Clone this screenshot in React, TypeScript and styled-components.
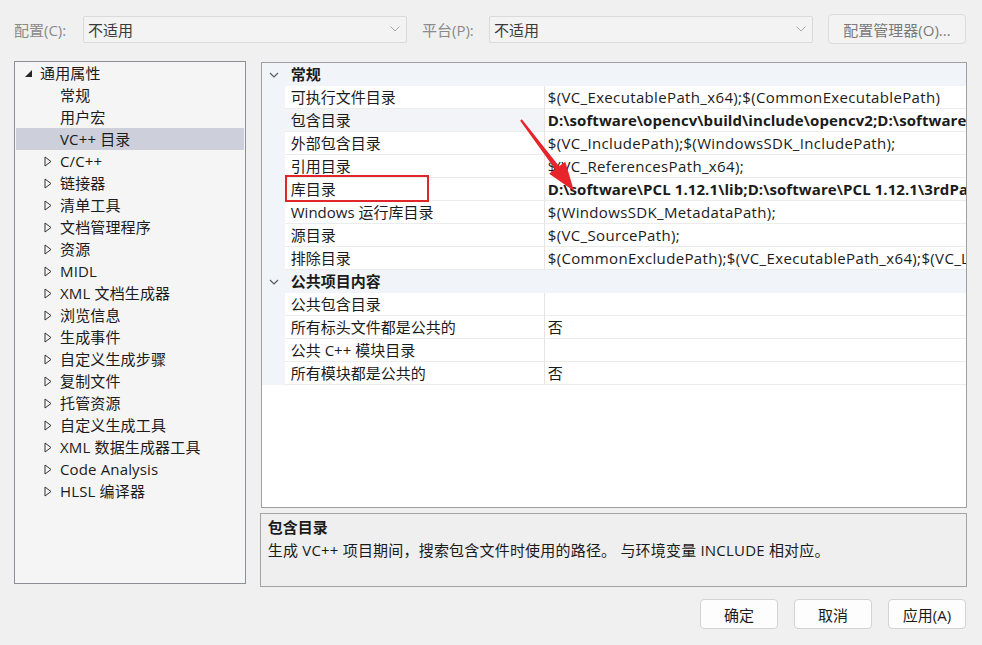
import React from 'react';
import styled, {createGlobalStyle} from 'styled-components';

const GlobalStyle = createGlobalStyle`
  html, body {
    margin: 0;
    padding: 0;
    background: #f0f0f0;
  }
  * {
    box-sizing: border-box;
  }
  body {
    font-family: "Open Sans", "Noto Sans CJK SC", sans-serif;
    font-size: 15px;
    color: #1b1b1b;
  }
`

type TreeItem = { label: string; level: 0 | 1; expander?: 'open' | 'closed'; selected?: boolean }

const treeItems: TreeItem[] = [
    {label: '通用属性', level: 0, expander: 'open'},
    {label: '常规', level: 1},
    {label: '用户宏', level: 1},
    {label: 'VC++ 目录', level: 1, selected: true},
    {label: 'C/C++', level: 1, expander: 'closed'},
    {label: '链接器', level: 1, expander: 'closed'},
    {label: '清单工具', level: 1, expander: 'closed'},
    {label: '文档管理程序', level: 1, expander: 'closed'},
    {label: '资源', level: 1, expander: 'closed'},
    {label: 'MIDL', level: 1, expander: 'closed'},
    {label: 'XML 文档生成器', level: 1, expander: 'closed'},
    {label: '浏览信息', level: 1, expander: 'closed'},
    {label: '生成事件', level: 1, expander: 'closed'},
    {label: '自定义生成步骤', level: 1, expander: 'closed'},
    {label: '复制文件', level: 1, expander: 'closed'},
    {label: '托管资源', level: 1, expander: 'closed'},
    {label: '自定义生成工具', level: 1, expander: 'closed'},
    {label: 'XML 数据生成器工具', level: 1, expander: 'closed'},
    {label: 'Code Analysis', level: 1, expander: 'closed'},
    {label: 'HLSL 编译器', level: 1, expander: 'closed'},
]

type Prop = { name: string; value: string; bold?: boolean; selected?: boolean }
type Category = { title: string; props: Prop[] }

// long values are clipped by the grid edge, just like in the dialog
const categories: Category[] = [
    {
        title: '常规',
        props: [
            {name: '可执行文件目录', value: '$(VC_ExecutablePath_x64);$(CommonExecutablePath)'},
            {name: '包含目录', value: 'D:\\software\\opencv\\build\\include\\opencv2;D:\\software', bold: true, selected: true},
            {name: '外部包含目录', value: '$(VC_IncludePath);$(WindowsSDK_IncludePath);'},
            {name: '引用目录', value: '$(VC_ReferencesPath_x64);'},
            {name: '库目录', value: 'D:\\software\\PCL 1.12.1\\lib;D:\\software\\PCL 1.12.1\\3rdPa', bold: true},
            {name: 'Windows 运行库目录', value: '$(WindowsSDK_MetadataPath);'},
            {name: '源目录', value: '$(VC_SourcePath);'},
            {name: '排除目录', value: '$(CommonExcludePath);$(VC_ExecutablePath_x64);$(VC_L'},
        ],
    },
    {
        title: '公共项目内容',
        props: [
            {name: '公共包含目录', value: ''},
            {name: '所有标头文件都是公共的', value: '否'},
            {name: '公共 C++ 模块目录', value: ''},
            {name: '所有模块都是公共的', value: '否'},
        ],
    },
]

const Chevron = () => (
    <svg width="10" height="6" viewBox="0 0 10 6">
        <polyline points="1,1 5,5 9,1" fill="none" stroke="#5a5a5a" strokeWidth="1.2"/>
    </svg>
)

const ComboChevron = () => (
    <svg width="10" height="6" viewBox="0 0 10 6">
        <polyline points="0.5,0.5 5,5 9.5,0.5" fill="none" stroke="#a8a8a8" strokeWidth="1"/>
    </svg>
)

const ExpandIcon = ({open}: { open: boolean }) => open ? (
    <svg width="9" height="9" viewBox="0 0 9 9">
        <polygon points="8,1 8,8 1,8" fill="#262626"/>
    </svg>
) : (
    <svg width="8" height="11" viewBox="0 0 8 11">
        <polygon points="1,1 7,5.5 1,10" fill="none" stroke="#333" strokeWidth="1"/>
    </svg>
)

export default function App() {
    return (
        <Page>
            <GlobalStyle/>
            <TopBar>
                <FieldLabel $width={69}>配置(C):</FieldLabel>
                <Combo>
                    <span>不适用</span>
                    <ComboChevron/>
                </Combo>
                <FieldLabel $width={67} style={{marginLeft: 15}}>平台(P):</FieldLabel>
                <Combo>
                    <span>不适用</span>
                    <ComboChevron/>
                </Combo>
                <ManagerButton>配置管理器(O)...</ManagerButton>
            </TopBar>

            <Body>
                <TreePanel>
                    {treeItems.map(item => (
                        <TreeRow key={item.label} $level={item.level} $selected={!!item.selected}>
                            <Expander>
                                {item.expander && <ExpandIcon open={item.expander === 'open'}/>}
                            </Expander>
                            {item.label}
                        </TreeRow>
                    ))}
                </TreePanel>

                <RightColumn>
                    <Grid>
                        {categories.map(cat => (
                            <React.Fragment key={cat.title}>
                                <CategoryRow>
                                    <Gutter><Chevron/></Gutter>
                                    <CategoryTitle>{cat.title}</CategoryTitle>
                                </CategoryRow>
                                {cat.props.map(p => (
                                    <PropRow key={p.name}>
                                        <Gutter/>
                                        <NameCell $selected={!!p.selected}>{p.name}</NameCell>
                                        <ValueCell $bold={!!p.bold}>{p.value}</ValueCell>
                                    </PropRow>
                                ))}
                            </React.Fragment>
                        ))}
                    </Grid>
                    <DescPanel>
                        <DescTitle>包含目录</DescTitle>
                        <DescText>生成 VC++ 项目期间，搜索包含文件时使用的路径。 与环境变量 INCLUDE 相对应。</DescText>
                    </DescPanel>
                </RightColumn>
            </Body>

            <Footer>
                <DialogButton>确定</DialogButton>
                <DialogButton>取消</DialogButton>
                <DialogButton>应用(A)</DialogButton>
            </Footer>

            <Highlight/>
            <Arrow width="982" height="645" viewBox="0 0 982 645">
                <polygon
                    points="521.8,119.2 559.1,166.2 565.3,161.8 574,191 549.2,173.8 555.1,169.2 520.2,120.8"
                    fill="#e8232a"
                />
            </Arrow>
        </Page>
    );
}

const Page = styled.div`
  position: relative;
  width: 982px;
  height: 645px;
  overflow: hidden;
  padding: 14px 15px 0 14px;
  background: #f0f0f0;
`

const TopBar = styled.div`
  display: flex;
  align-items: center;
  height: 30px;
`

const FieldLabel = styled.div<{ $width: number }>`
  width: ${p => p.$width}px;
  color: #8a8a8a;
  font-size: 15px;
  flex-shrink: 0;
`

const Combo = styled.div`
  width: 324px;
  height: 27px;
  display: flex;
  align-items: center;
  justify-content: space-between;
  padding: 0 6px 0 4px;
  background: #f3f3f3;
  border: 1px solid #dadada;
  border-radius: 2px;
  color: #3a3a3a;
  flex-shrink: 0;
`

const ManagerButton = styled.div`
  margin-left: 15px;
  width: 138px;
  height: 30px;
  display: flex;
  align-items: center;
  justify-content: center;
  background: #f3f3f3;
  border: 1px solid #dcdcdc;
  border-radius: 4px;
  color: #7a7a7a;
`

const Body = styled.div`
  display: flex;
  gap: 15px;
  margin-top: 17px;
`

const TreePanel = styled.div`
  width: 232px;
  height: 523px;
  background: #f5f5f5;
  border: 1px solid #8c8f96;
  padding: 0 1px;
`

const TreeRow = styled.div<{ $level: number; $selected: boolean }>`
  height: 22px;
  display: flex;
  align-items: center;
  padding-left: ${p => p.$level === 0 ? 8 : 28}px;
  line-height: 20px;
  letter-spacing: 0.15px;
  background: ${p => p.$selected ? '#cdd0db' : 'transparent'};
  white-space: nowrap;
`

const Expander = styled.span`
  width: 16px;
  height: 22px;
  display: flex;
  align-items: center;
  justify-content: flex-start;
  flex-shrink: 0;
`

const RightColumn = styled.div`
  width: 708px;
  display: flex;
  flex-direction: column;
  gap: 5px;
  margin-top: 1px;
  margin-left: -1px;
`

const Grid = styled.div`
  height: 446px;
  background: #ffffff;
  border: 1px solid #a0a0a0;
  overflow: hidden;
  margin-left: 1px;
`

const CategoryRow = styled.div`
  display: grid;
  grid-template-columns: 23px 1fr;
  height: 23px;
  background: #f1f4f9;
`

const CategoryTitle = styled.div`
  padding-left: 6px;
  font-weight: 700;
  line-height: 23px;
`

const PropRow = styled.div`
  display: grid;
  grid-template-columns: 23px 260px 1fr;
  height: 23px;
`

const Gutter = styled.div`
  background: #f1f4f9;
  display: flex;
  align-items: center;
  justify-content: center;
  padding-left: 2px;
`

const NameCell = styled.div<{ $selected: boolean }>`
  padding-left: 6px;
  line-height: 22px;
  border-bottom: 1px solid #ececec;
  border-right: 1px solid #e4e4e4;
  background: ${p => p.$selected ? '#f2f4f8' : '#ffffff'};
  white-space: nowrap;
  overflow: hidden;
`

const ValueCell = styled.div<{ $bold: boolean }>`
  padding-left: 3px;
  line-height: 22px;
  letter-spacing: ${p => p.$bold ? 0.08 : 0.35}px;
  border-bottom: 1px solid #ececec;
  font-weight: ${p => p.$bold ? 700 : 400};
  white-space: nowrap;
  overflow: hidden;
`

const DescPanel = styled.div`
  height: 74px;
  background: #efefef;
  border: 1px solid #a3a3a3;
  padding: 2px 7px;
`

const DescTitle = styled.div`
  font-weight: 700;
  line-height: 23px;
`

const DescText = styled.div`
  line-height: 23px;
  letter-spacing: 0.2px;
`

const Footer = styled.div`
  display: flex;
  justify-content: flex-end;
  gap: 16px;
  margin-top: 12px;
  padding-right: 1px;
`

const DialogButton = styled.div`
  width: 78px;
  height: 30px;
  display: flex;
  align-items: center;
  justify-content: center;
  background: #fdfdfd;
  border: 1px solid #d3d3d3;
  border-radius: 4px;
  color: #1b1b1b;
`

const Highlight = styled.div`
  position: absolute;
  left: 285px;
  top: 175px;
  width: 144px;
  height: 27px;
  border: 2px solid #e0262b;
  pointer-events: none;
`

const Arrow = styled.svg`
  position: absolute;
  left: 0;
  top: 0;
  pointer-events: none;
`
